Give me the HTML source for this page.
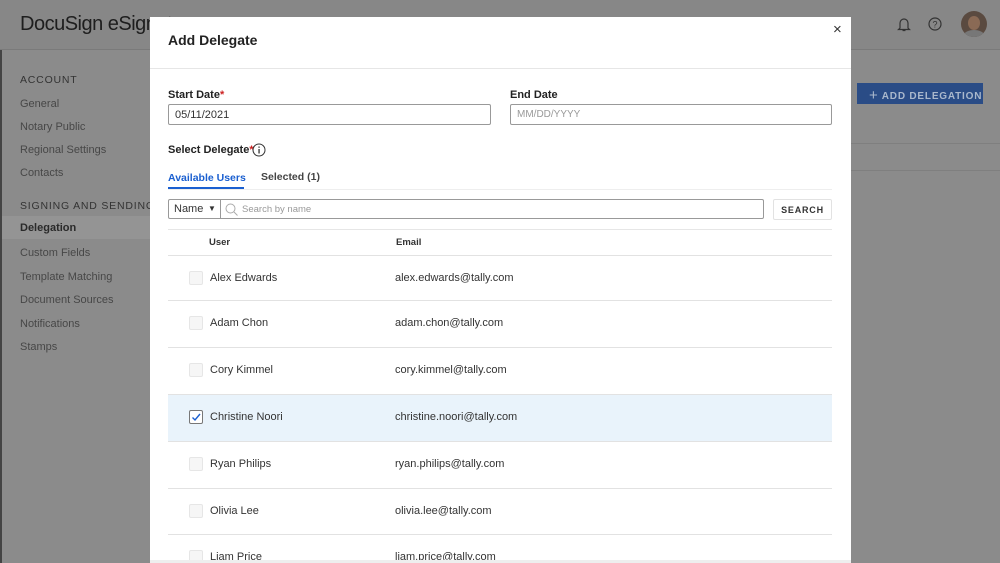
<!DOCTYPE html>
<html style="overflow:hidden;background:#8b8b8b"><head><style>
*{margin:0;padding:0;box-sizing:border-box}
body{width:1000px;height:563px;overflow:hidden;background:#8b8b8b;font-family:"Liberation Sans",sans-serif;position:relative}
.a{position:absolute}
.side{color:#474747;font-size:11px}
.hd{color:#333;font-size:10.5px;letter-spacing:.8px}
.m{position:absolute;left:150px;top:17px;width:701px;height:546px;background:#fff;overflow:hidden}
.lbl{font-size:11px;font-weight:bold;color:#222}
.inp{position:absolute;height:21px;border:1px solid #999;border-radius:2px;font-size:11px;padding:4px 6px;color:#333}
.row{position:absolute;left:18px;width:664px;height:47px;border-top:1px solid #e2e2e2}
.cb{position:absolute;left:21px;top:15px;width:14px;height:14px;border:1px solid #e6e6e6;background:#f6f6f6;border-radius:2px}
.nm{position:absolute;left:42px;top:16px;font-size:11px;color:#333}
.em{position:absolute;left:227px;top:16px;font-size:11px;color:#333}
</style></head><body>
<div class="a" style="left:0;top:0;width:2px;height:563px;background:#444"></div>
<div class="a" style="left:0;top:0;width:1000px;height:50px;background:#878787;border-bottom:1px solid #7a7a7a"></div>
<div class="a" style="left:20px;top:13px;font-size:20px;color:#1e1e1e;letter-spacing:-.5px">DocuSign eSignature</div>
<svg class="a" style="left:897px;top:17px" width="14" height="15" viewBox="0 0 14 15"><path d="M3 11V6a4 4 0 018 0v5l1.5 1.5h-11z M5.5 13.5h3" fill="none" stroke="#333" stroke-width="1.2"/></svg>
<svg class="a" style="left:928px;top:17px" width="14" height="14"><circle cx="7" cy="7" r="6" fill="none" stroke="#333" stroke-width="1.2"/><text x="7" y="10.5" font-size="9" text-anchor="middle" fill="#333" font-family="Liberation Sans">?</text></svg>
<div class="a" style="left:961px;top:11px;width:26px;height:26px;border-radius:50%;background:#5a4a40;overflow:hidden"><div class="a" style="left:7px;top:5px;width:12px;height:14px;border-radius:50%;background:#8a6a55"></div><div class="a" style="left:3px;top:19px;width:20px;height:10px;border-radius:50%;background:#777"></div></div>
<div class="a" style="left:857px;top:83px;width:126px;height:21px;background:#2a4c86;color:#aab8cc;font-size:10px;font-weight:bold;letter-spacing:.8px;padding:3px 0 0 12px"><span style="font-size:15px;font-weight:normal;position:relative;top:1px">+</span> ADD DELEGATION</div>
<div class="a" style="left:851px;top:143px;width:149px;height:1px;background:#7f7f7f"></div>
<div class="a" style="left:851px;top:170px;width:149px;height:1px;background:#7f7f7f"></div>
<div class="a hd" style="left:20px;top:74px">ACCOUNT</div>
<div class="a side" style="left:20px;top:98px">General</div>
<div class="a side" style="left:20px;top:121px">Notary Public</div>
<div class="a side" style="left:20px;top:144px">Regional Settings</div>
<div class="a side" style="left:20px;top:167px">Contacts</div>
<div class="a hd" style="left:20px;top:200px">SIGNING AND SENDING</div>
<div class="a" style="left:2px;top:216px;width:148px;height:23px;background:#949494"></div>
<div class="a side" style="left:20px;top:222px;font-weight:bold;color:#2a2a2a">Delegation</div>
<div class="a side" style="left:20px;top:247px">Custom Fields</div>
<div class="a side" style="left:20px;top:271px">Template Matching</div>
<div class="a side" style="left:20px;top:294px">Document Sources</div>
<div class="a side" style="left:20px;top:318px">Notifications</div>
<div class="a side" style="left:20px;top:341px">Stamps</div>

<div class="m">
<div class="a" style="left:18px;top:15px;font-size:14px;font-weight:bold;color:#222">Add Delegate</div>
<div class="a" style="left:683px;top:4px;font-size:15px;color:#333">×</div>
<div class="a" style="left:0;top:51px;width:701px;height:1px;background:#e6e6e6"></div>
<div class="a lbl" style="left:18px;top:72px">Start Date<span style="color:#c22">*</span></div>
<div class="inp" style="left:18px;top:87px;width:323px">05/11/2021</div>
<div class="a lbl" style="left:360px;top:72px">End Date</div>
<div class="inp" style="left:360px;top:87px;width:322px;color:#999;font-size:10px">MM/DD/YYYY</div>
<div class="a lbl" style="left:18px;top:127px">Select Delegate<span style="color:#c22">*</span></div>
<svg class="a" style="left:102px;top:126px" width="14" height="14"><circle cx="7" cy="7" r="6" fill="none" stroke="#333"/><rect x="6.4" y="6" width="1.3" height="4.5" fill="#333"/><rect x="6.4" y="3.5" width="1.3" height="1.3" fill="#333"/></svg>
<div class="a" style="left:18px;top:155px;font-size:10.5px;font-weight:bold;color:#1a5fd0">Available Users</div>
<div class="a" style="left:18px;top:170px;width:76px;height:2px;background:#1a5fd0"></div>
<div class="a" style="left:111px;top:154px;font-size:10.5px;font-weight:bold;color:#444">Selected (1)</div>
<div class="a" style="left:18px;top:172px;width:664px;height:1px;background:#eee"></div>
<div class="inp" style="left:18px;top:182px;width:596px;height:20px;padding:0"></div>
<div class="a" style="left:24px;top:186px;font-size:11px;color:#333">Name</div>
<div class="a" style="left:58px;top:187px;font-size:8px;color:#333">▼</div>
<div class="a" style="left:70px;top:183px;width:1px;height:18px;background:#999"></div>
<svg class="a" style="left:75px;top:186px" width="13" height="13"><circle cx="5.5" cy="5.5" r="4.5" fill="none" stroke="#aaa"/><path d="M9 9l3.5 3.5" stroke="#aaa"/></svg>
<div class="a" style="left:92px;top:187px;font-size:9.5px;color:#999">Search by name</div>
<div class="a" style="left:623px;top:182px;width:59px;height:21px;border:1px solid #e2e2e2;border-radius:2px;font-size:9px;font-weight:bold;letter-spacing:.8px;color:#333;text-align:center;padding-top:5px">SEARCH</div>
<div class="a" style="left:18px;top:212px;width:664px;height:1px;background:#e6e6e6"></div>
<div class="a" style="left:59px;top:220px;font-size:9.5px;font-weight:bold;color:#333">User</div>
<div class="a" style="left:246px;top:220px;font-size:9.5px;font-weight:bold;color:#333">Email</div>
<div class="row" style="top:238px"><div class="cb"></div><div class="nm">Alex Edwards</div><div class="em">alex.edwards@tally.com</div></div>
<div class="row" style="top:283px"><div class="cb"></div><div class="nm">Adam Chon</div><div class="em">adam.chon@tally.com</div></div>
<div class="row" style="top:330px"><div class="cb"></div><div class="nm">Cory Kimmel</div><div class="em">cory.kimmel@tally.com</div></div>
<div class="row" style="top:377px;background:#e9f3fb"><div class="cb" style="background:#fff;border-color:#777"><svg width="12" height="12" style="position:absolute;left:0;top:0"><path d="M2.5 6.5l2.5 2.5 5-6" fill="none" stroke="#1a5fd0" stroke-width="1.4"/></svg></div><div class="nm">Christine Noori</div><div class="em">christine.noori@tally.com</div></div>
<div class="row" style="top:424px"><div class="cb"></div><div class="nm">Ryan Philips</div><div class="em">ryan.philips@tally.com</div></div>
<div class="row" style="top:471px"><div class="cb"></div><div class="nm">Olivia Lee</div><div class="em">olivia.lee@tally.com</div></div>
<div class="row" style="top:517px"><div class="cb"></div><div class="nm">Liam Price</div><div class="em">liam.price@tally.com</div></div>
</div>
<div class="a" style="left:150px;top:560px;width:701px;height:3px;background:#eee"></div>
</body></html>
